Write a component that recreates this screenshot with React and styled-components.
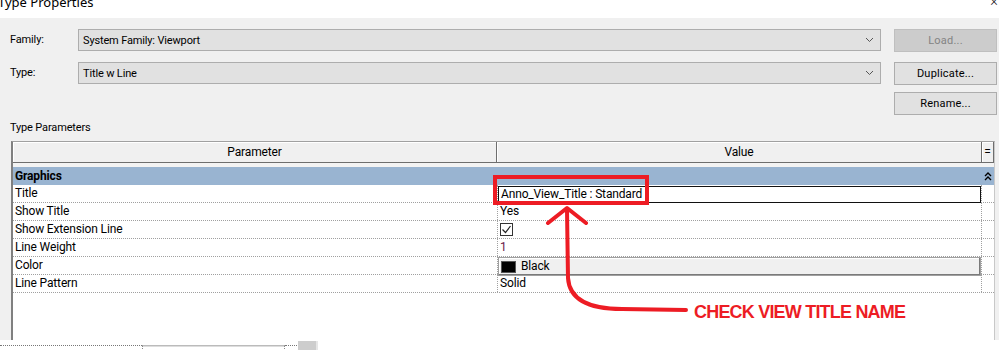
import React from 'react';
import styled, { createGlobalStyle } from 'styled-components';

const Global = createGlobalStyle`
  html, body { margin: 0; padding: 0; background: #f0f0f0; }
  body { width: 999px; height: 350px; overflow: hidden; font-family: Roboto, "Noto Sans", "Liberation Sans", sans-serif; color: #000; }
  * { box-sizing: border-box; }
`;

const Window = styled.div`
  position: relative;
  width: 999px;
  height: 350px;
  overflow: hidden;
  background: #f0f0f0;
  display: flex;
  flex-direction: column;
`;

const TitleBar = styled.div`
  flex: none;
  height: 18px;
  background: #fff;
  display: flex;
  justify-content: space-between;
  align-items: flex-start;
  overflow: hidden;
`;

const TitleText = styled.span`
  font-family: "Noto Sans", sans-serif;
  font-size: 13px;
  line-height: 13px;
  margin-top: -4px;
  margin-left: -2px;
`;

const CloseGlyph = styled.span`
  font-family: "Noto Sans", sans-serif;
  font-size: 14px;
  line-height: 14px;
  margin-top: -5px;
  margin-right: 1px;
  font-weight: 300;
`;

const Body = styled.div`
  flex: none;
  height: 322px;
  padding: 11px 4px 0 10px;
  display: flex;
  flex-direction: column;
`;

const TopGrid = styled.div`
  display: grid;
  grid-template-columns: 68px 803px 116px;
  grid-template-rows: 33px 30px 23px;
  align-items: start;
`;

const dialogFont = `
  font-size: 11px;
  letter-spacing: -0.15px;
`;

const Label = styled.div`
  ${dialogFont}
  line-height: 22px;
`;

const Combo = styled.div`
  ${dialogFont}
  height: 22px;
  border: 1px solid #adadad;
  background: #e1e1e1;
  display: flex;
  align-items: center;
  justify-content: space-between;
  padding: 0 6px 0 4px;
`;

const Button = styled.div`
  font-size: 11px;
  letter-spacing: 0.2px;
  justify-self: end;
  grid-column: 3;
  width: 103px;
  height: 23px;
  display: flex;
  align-items: center;
  justify-content: center;
  border: 1px solid ${p => (p.$disabled ? '#bfbfbf' : '#adadad')};
  background: ${p => (p.$disabled ? '#cccccc' : '#e1e1e1')};
  color: ${p => (p.$disabled ? '#838383' : '#000')};
`;

const SectionLabel = styled.div`
  ${dialogFont}
  line-height: 14px;
  margin: 6px 0 6px 0;
`;

const Table = styled.div`
  margin-left: 1px;
  width: 984px;
  flex: 1;
  background: #fff;
  border-left: 2px solid #808080;
  border-top: 1px solid #a0a0a0;
  border-right: 1px solid #c8c8c8;
  display: flex;
  flex-direction: column;
`;

const rowFont = `
  font-size: 12px;
  letter-spacing: -0.15px;
`;

const HeaderRow = styled.div`
  display: grid;
  grid-template-columns: 484px 485px 1fr;
  height: 21px;
`;

const HeaderCell = styled.div`
  ${rowFont}
  background: #f0f0f0;
  border-right: 1px solid #6e6e6e;
  border-bottom: 1px solid #6e6e6e;
  box-shadow: inset 1px 1px 0 #fff;
  display: flex;
  align-items: center;
  justify-content: center;
`;

const Strip = styled.div`
  height: 4px;
  background: #f3f3f3;
`;

const GroupRow = styled.div`
  display: grid;
  grid-template-columns: 969px 1fr;
  height: 18px;
  background: #99b4d1;
  align-items: center;
`;

const GroupTitle = styled.div`
  ${rowFont}
  font-weight: 700;
  padding-left: 2px;
`;

const Row = styled.div`
  display: grid;
  grid-template-columns: 484px 485px 1fr;
  height: 18px;
  border-bottom: 1px dotted #a0a0a0;
`;

const ParamCell = styled.div`
  ${rowFont}
  line-height: 17px;
  padding-left: 2px;
  white-space: nowrap;
`;

const ValueCell = styled.div`
  ${rowFont}
  border-left: 1px dotted #a0a0a0;
  border-right: 1px dotted #a0a0a0;
  line-height: 17px;
  padding-left: ${p => (p.$boxed ? 0 : 2)}px;
  color: ${p => p.$tint || '#000'};
  display: flex;
  align-items: center;
  white-space: nowrap;
`;

const EditBox = styled.div`
  flex: 1;
  align-self: stretch;
  margin-top: 1px;
  border: 1px solid #111;
  background: #fff;
  padding-left: 2px;
  line-height: 15px;
`;

const ColorBox = styled.div`
  flex: 1;
  align-self: stretch;
  background: #f0f0f0;
  border: 1px solid #a0a0a0;
  box-shadow: inset -1px -1px 0 #7a7a7a, inset 1px 1px 0 #fff;
  display: flex;
  align-items: center;
  gap: 5px;
  padding-left: 2px;
`;

const Swatch = styled.span`
  width: 15px;
  height: 12px;
  background: #000;
  border: 1px solid #555;
`;

const CheckBox = styled.span`
  width: 13px;
  height: 13px;
  border: 1px solid #333;
  background: #fff;
  display: flex;
  align-items: center;
  justify-content: center;
`;

const EqCell = styled.div`
  display: flex;
  align-items: center;
  justify-content: center;
`;

const BottomStrip = styled.div`
  flex: none;
  height: 10px;
  background: #fff;
  display: flex;
  align-items: flex-start;
`;

const DottedSeg = styled.div`
  width: ${p => p.$w}px;
  margin-top: 5px;
  border-top: 1px dotted #777;
`;

const SlotBox = styled.div`
  width: 143px;
  height: 10px;
  margin-top: 5px;
  border-left: 1px dotted #888;
  border-right: 1px dotted #888;
  border-top: 1px solid #bbb;
  box-shadow: inset 0 1px 0 #ddd;
`;

const Thumb = styled.div`
  width: 20px;
  height: 10px;
  margin-top: 1px;
  margin-left: 1px;
  background: #cdcdcd;
  border-right: 2px solid #e6e6e6;
`;

const RedBox = styled.div`
  position: absolute;
  left: 493px;
  top: 175px;
  width: 156px;
  height: 30px;
  border: 4px solid #ed1c24;
`;

const Overlay = styled.svg`
  position: absolute;
  left: 0;
  top: 0;
  pointer-events: none;
`;

const Callout = styled.div`
  position: absolute;
  left: 694px;
  top: 303px;
  font-family: "Liberation Sans", Arial, sans-serif;
  font-weight: 700;
  font-size: 18px;
  line-height: 18px;
  letter-spacing: -0.8px;
  color: #ed1c24;
  white-space: nowrap;
`;

const Chevron = () => (
  <svg width="9" height="6" viewBox="0 0 9 6">
    <polyline points="1,1 4.5,4.5 8,1" fill="none" stroke="#555" strokeWidth="1" />
  </svg>
);

const DoubleUp = () => (
  <svg width="8" height="9" viewBox="0 0 8 9">
    <polyline points="1,4 4,1 7,4" fill="none" stroke="#000" strokeWidth="1.4" />
    <polyline points="1,8 4,5 7,8" fill="none" stroke="#000" strokeWidth="1.4" />
  </svg>
);

const Check = () => (
  <svg width="11" height="11" viewBox="0 0 11 11">
    <polyline points="1.5,5.5 4.5,8.5 9.5,2" fill="none" stroke="#222" strokeWidth="1.2" />
  </svg>
);

const rows = [
  { name: 'Title', kind: 'edit', value: 'Anno_View_Title : Standard' },
  { name: 'Show Title', value: 'Yes' },
  { name: 'Show Extension Line', kind: 'check' },
  { name: 'Line Weight', value: '1', tint: '#6a2048' },
  { name: 'Color', kind: 'color', value: 'Black' },
  { name: 'Line Pattern', value: 'Solid' },
];

function renderValue(r) {
  if (r.kind === 'edit') return <ValueCell $boxed><EditBox>{r.value}</EditBox></ValueCell>;
  if (r.kind === 'check') return <ValueCell><CheckBox><Check /></CheckBox></ValueCell>;
  if (r.kind === 'color') return <ValueCell $boxed><ColorBox><Swatch />{r.value}</ColorBox></ValueCell>;
  return <ValueCell $tint={r.tint}>{r.value}</ValueCell>;
}

export default function App() {
  return (
    <Window>
      <Global />
      <TitleBar>
        <TitleText>Type Properties</TitleText>
        <CloseGlyph>×</CloseGlyph>
      </TitleBar>
      <Body>
        <TopGrid>
          <Label>Family:</Label>
          <Combo>System Family: Viewport<Chevron /></Combo>
          <Button $disabled>Load...</Button>
          <Label>Type:</Label>
          <Combo>Title w Line<Chevron /></Combo>
          <Button>Duplicate...</Button>
          <Button>Rename...</Button>
        </TopGrid>
        <SectionLabel>Type Parameters</SectionLabel>
        <Table>
          <HeaderRow>
            <HeaderCell>Parameter</HeaderCell>
            <HeaderCell>Value</HeaderCell>
            <HeaderCell>=</HeaderCell>
          </HeaderRow>
          <Strip />
          <GroupRow>
            <GroupTitle>Graphics</GroupTitle>
            <EqCell><DoubleUp /></EqCell>
          </GroupRow>
          {rows.map(r => (
            <Row key={r.name}>
              <ParamCell>{r.name}</ParamCell>
              {renderValue(r)}
              <div />
            </Row>
          ))}
        </Table>
      </Body>
      <BottomStrip>
        <DottedSeg $w={142} />
        <SlotBox />
        <DottedSeg $w={12} />
        <Thumb />
      </BottomStrip>

      <RedBox />
      <Overlay width="999" height="350" viewBox="0 0 999 350">
        <path
          d="M548 223 L567 208 L586 223 M567 209 L568 278 Q570 309 622 309 L686 310"
          fill="none"
          stroke="#ed1c24"
          strokeWidth="4"
          strokeLinecap="round"
          strokeLinejoin="round"
        />
      </Overlay>
      <Callout>CHECK VIEW TITLE NAME</Callout>
    </Window>
  );
}
